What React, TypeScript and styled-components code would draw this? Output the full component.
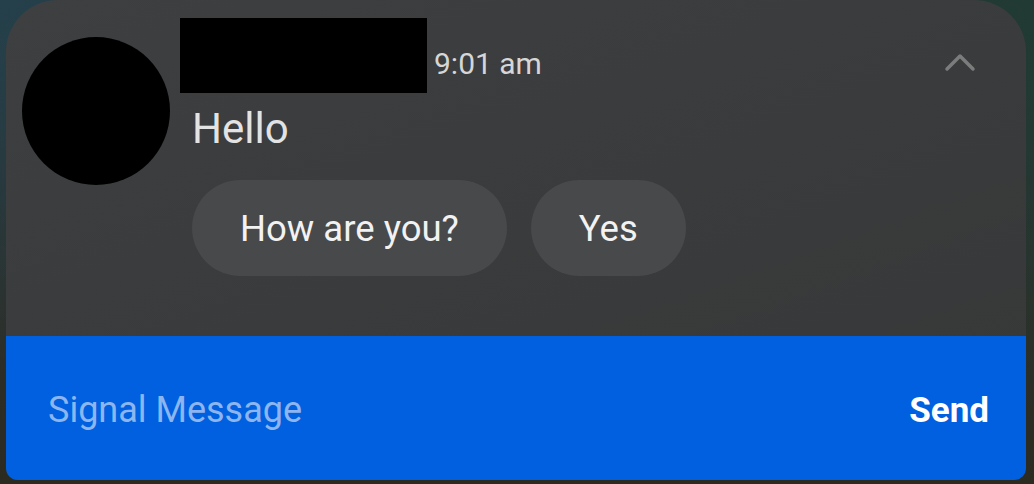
import styled, { createGlobalStyle } from 'styled-components'

const GlobalStyle = createGlobalStyle`
  html, body {
    margin: 0;
    padding: 0;
    height: 100%;
  }
  body {
    font-family: Roboto, "Noto Sans", sans-serif;
    background:
      radial-gradient(ellipse at 0% 0%, #25404b 0%, rgba(37, 64, 75, 0) 55%),
      radial-gradient(ellipse at 100% 0%, #213a33 0%, rgba(33, 58, 51, 0) 60%),
      linear-gradient(180deg, #28363a 0%, #2c2f2a 60%, #2c2b22 100%);
    overflow: hidden;
  }
`

const Page = styled.div`
  width: 1034px;
  height: 484px;
  padding-left: 6px;
  box-sizing: border-box;
`

const Card = styled.div`
  width: 1020px;
  height: 480px;
  display: flex;
  flex-direction: column;
  border-radius: 52px 52px 12px 12px;
  overflow: hidden;
  background: linear-gradient(160deg, #3d3f40 0%, #393b3c 50%, #363838 100%);
`

const Body = styled.div`
  flex: 1;
  display: flex;
  padding: 0 50px 0 16px;
`

const Avatar = styled.div`
  width: 148px;
  height: 148px;
  border-radius: 50%;
  background: #000;
  margin-top: 37px;
  flex-shrink: 0;
`

const Content = styled.div`
  flex: 1;
  display: flex;
  flex-direction: column;
  padding-left: 10px;
  padding-top: 18px;
`

const Header = styled.div`
  display: flex;
  align-items: flex-end;
`

const NameBlock = styled.div`
  width: 247px;
  height: 75px;
  background: #000;
`

const Time = styled.span`
  font-size: 30px;
  line-height: 30px;
  color: #d6d6d6;
  margin-left: 7px;
  margin-bottom: 14px;
`

const Collapse = styled.button`
  margin-left: auto;
  align-self: flex-start;
  margin-top: 34px;
  background: none;
  border: none;
  padding: 0;
  width: 32px;
  height: 20px;
  display: flex;
  cursor: pointer;
`

const Message = styled.div`
  font-size: 42px;
  line-height: 52px;
  color: #e3e3e3;
  padding-left: 12px;
  margin-top: 10px;
`

const Replies = styled.div`
  display: flex;
  gap: 24px;
  padding-left: 12px;
  margin-top: 25px;
`

const Chip = styled.button`
  height: 96px;
  padding: 0 48px;
  border-radius: 48px;
  border: none;
  background: #47494a;
  color: #f2f2f2;
  font-family: Roboto, "Noto Sans", sans-serif;
  font-size: 36.5px;
  cursor: pointer;
`

const Footer = styled.div`
  height: 144px;
  flex-shrink: 0;
  display: flex;
  align-items: center;
  justify-content: space-between;
  background: #0060df;
  padding: 4px 37px 0 42px;
  box-sizing: border-box;
`

const Input = styled.input`
  flex: 1;
  background: none;
  border: none;
  outline: none;
  font-family: Roboto, "Noto Sans", sans-serif;
  font-size: 36px;
  color: #fff;
  padding: 0;

  &::placeholder {
    color: #8db6f0;
  }
`

const Send = styled.button`
  background: none;
  border: none;
  padding: 0;
  font-family: Roboto, "Noto Sans", sans-serif;
  font-size: 35px;
  font-weight: 700;
  color: #fff;
  cursor: pointer;
`

export default function App() {
  return (
    <>
      <GlobalStyle />
      <Page>
        <Card>
          <Body>
            <Avatar />
            <Content>
              <Header>
                <NameBlock />
                <Time>9:01 am</Time>
                <Collapse aria-label="Collapse">
                  <svg width="32" height="20" viewBox="0 0 32 20">
                    <polyline
                      points="3,17 16,4 29,17"
                      fill="none"
                      stroke="#7b7c7c"
                      strokeWidth="3.5"
                      strokeLinecap="round"
                      strokeLinejoin="round"
                    />
                  </svg>
                </Collapse>
              </Header>
              <Message>Hello</Message>
              <Replies>
                <Chip>How are you?</Chip>
                <Chip>Yes</Chip>
              </Replies>
            </Content>
          </Body>
          <Footer>
            <Input placeholder="Signal Message" />
            <Send>Send</Send>
          </Footer>
        </Card>
      </Page>
    </>
  )
}
